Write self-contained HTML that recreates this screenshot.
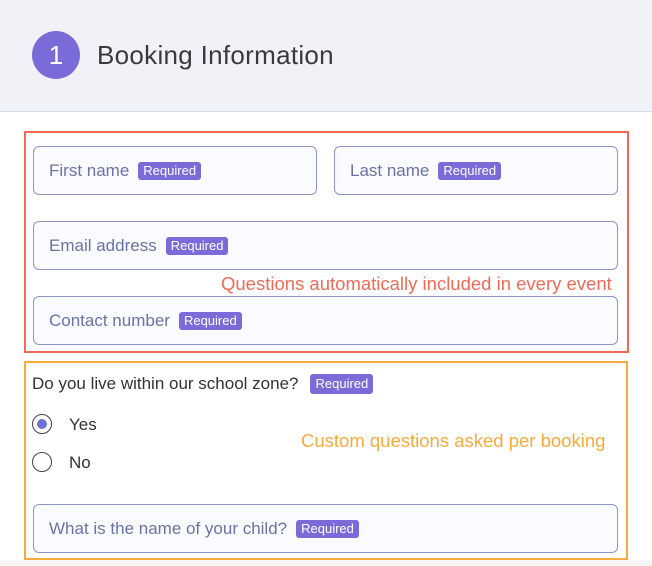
<!DOCTYPE html>
<html><head><style>
*{margin:0;padding:0;box-sizing:border-box}
body{width:652px;height:566px;background:#fff;font-family:"Liberation Sans",sans-serif;position:relative;overflow:hidden}
.hdr{position:absolute;left:0;top:0;width:652px;height:112px;background:#f1f2f8;border-bottom:1px solid #d6dbea}
.circ{position:absolute;left:32px;top:31px;width:48px;height:48px;border-radius:50%;background:#7a6cd8;color:#fff;font-size:26px;text-align:center;line-height:48px}
.title{position:absolute;left:97px;top:40px;font-size:26px;color:#3a3a3a;letter-spacing:0.3px}
.box{position:absolute;border:2px solid}
.inp{position:absolute;border:1.5px solid #8d95c6;border-radius:6px;background:#fafbff;height:49px;padding-left:15px;display:flex;align-items:center;font-size:17px;color:#6b72a6}
.b{display:inline-block;background:#7a6cd8;color:#fff;font-size:13px;border-radius:3px;padding:0 5px;height:18px;line-height:18px;margin-left:9px}
.note{position:absolute;font-size:18.5px}
.q{position:absolute;left:32px;top:374px;font-size:17px;color:#333}
.r{position:absolute;width:20px;height:20px;border-radius:50%;border:1.5px solid #444;left:32px}
.rl{position:absolute;left:69px;font-size:17px;color:#333}
</style></head><body>
<div class="hdr"><div class="circ">1</div><div class="title">Booking Information</div></div>
<div style="position:absolute;left:0;top:560px;width:652px;height:6px;background:#f6f6f7"></div>
<div class="box" style="left:24px;top:131px;width:605px;height:222px;border-color:#ef6b57"></div>
<div class="box" style="left:24px;top:361px;width:604px;height:199px;border-color:#f8aa3c"></div>
<div class="inp" style="left:33px;top:146px;width:284px">First name<span class="b">Required</span></div>
<div class="inp" style="left:334px;top:146px;width:284px">Last name<span class="b">Required</span></div>
<div class="inp" style="left:33px;top:221px;width:585px">Email address<span class="b">Required</span></div>
<div class="note" style="left:221px;top:273px;color:#ef6b57">Questions automatically included in every event</div>
<div class="inp" style="left:33px;top:296px;width:585px">Contact number<span class="b">Required</span></div>
<div class="q">Do you live within our school zone?<span class="b" style="margin-left:12px;vertical-align:1px;padding:1px 5px;height:20px;line-height:18px">Required</span></div>
<div class="r" style="top:414px"><div style="position:absolute;left:3.5px;top:3.5px;width:10px;height:10px;border-radius:50%;background:#6e72d8"></div></div>
<div class="rl" style="top:415px">Yes</div>
<div class="r" style="top:452px"></div>
<div class="rl" style="top:453px">No</div>
<div class="note" style="left:301px;top:430px;color:#f8aa3c">Custom questions asked per booking</div>
<div class="inp" style="left:33px;top:504px;width:585px">What is the name of your child?<span class="b">Required</span></div>
</body></html>
